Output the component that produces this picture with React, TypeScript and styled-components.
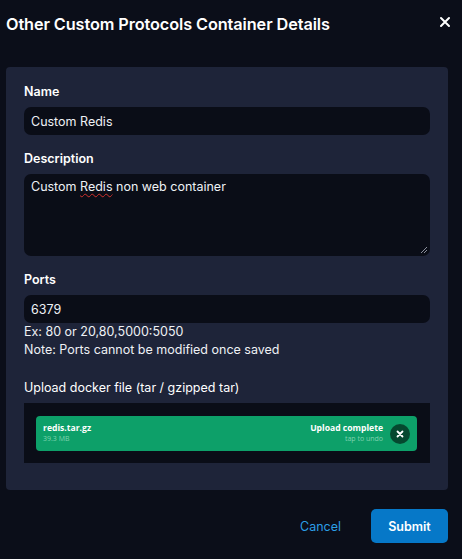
import { createGlobalStyle } from "styled-components";
import styled from "styled-components";

const GlobalStyle = createGlobalStyle`
  html, body {
    margin: 0;
    padding: 0;
    background: #0b0e19;
    font-family: Inter, "Noto Sans", sans-serif;
    color: #f5f7fa;
  }
  * { box-sizing: border-box; }
`;

const Modal = styled.div`
  width: 462px;
  height: 559px;
  background: #0b0e19;
  padding: 0 14px 0 6px;
  display: flex;
  flex-direction: column;
`;

const Header = styled.div`
  display: flex;
  justify-content: space-between;
  align-items: center;
  height: 46px;
  padding-top: 2px;
  margin-bottom: 21px;
`;

const Title = styled.h2`
  margin: 0;
  font-size: 16.3px;
  font-weight: 600;
  color: #ffffff;
  letter-spacing: -0.1px;
`;

const CloseButton = styled.button`
  background: none;
  border: none;
  color: #ffffff;
  padding: 0;
  margin-right: -4px;
  margin-top: -4px;
  display: flex;
  cursor: pointer;
`;

const Panel = styled.div`
  background: #1e2439;
  border-radius: 4px;
  padding: 17px 18px 27px 18px;
  display: flex;
  flex-direction: column;
`;

const Field = styled.div<{ $last?: boolean }>`
  display: flex;
  flex-direction: column;
  margin-bottom: ${({ $last }) => ($last ? "0" : "16px")};
`;

const Label = styled.label<{ $plain?: boolean }>`
  font-size: 12.5px;
  font-weight: ${({ $plain }) => ($plain ? 400 : 600)};
  color: #ffffff;
  margin-bottom: 7px;
  line-height: 16px;
`;

const Input = styled.div`
  height: 28px;
  background: #0a0d17;
  border-radius: 7px;
  padding: 0 7px;
  display: flex;
  align-items: center;
  font-size: 12.5px;
  color: #eef1f5;
`;

const TextArea = styled.div`
  position: relative;
  height: 82px;
  background: #0a0d17;
  border-radius: 7px;
  padding: 5px 7px;
  font-size: 12.5px;
  color: #eef1f5;
`;

const Misspelled = styled.span`
  text-decoration: underline wavy #d0312d;
  text-decoration-thickness: 1px;
  text-underline-offset: 2px;
`;

const Grip = styled.svg`
  position: absolute;
  right: 2px;
  bottom: 2px;
`;

const Hint = styled.div`
  font-size: 12.5px;
  color: #eef1f5;
  line-height: 18px;
`;

const Hints = styled.div`
  margin-top: 0;
  margin-bottom: 21px;
`;

const DropArea = styled.div`
  background: #0a0d17;
  padding: 13px 13px 12px 12px;
`;

const FileItem = styled.div`
  background: #0da069;
  border-radius: 4px;
  height: 35px;
  display: flex;
  align-items: center;
  padding: 0 7px;
  font-family: "Open Sans", sans-serif;
`;

const FileInfo = styled.div<{ $right?: boolean }>`
  display: flex;
  flex-direction: column;
  align-items: ${({ $right }) => ($right ? "flex-end" : "flex-start")};
  flex: ${({ $right }) => ($right ? "0 0 auto" : "1")};
`;

const FileMain = styled.span`
  font-size: 8.6px;
  font-weight: 700;
  color: #ffffff;
  line-height: 11px;
`;

const FileSub = styled.span`
  font-size: 7px;
  color: #7fd3b0;
  line-height: 10px;
`;

const UndoButton = styled.button`
  width: 20px;
  height: 20px;
  border-radius: 50%;
  border: none;
  background: rgba(0, 0, 0, 0.55);
  display: flex;
  align-items: center;
  justify-content: center;
  margin-left: 7px;
  padding: 0;
`;

const Footer = styled.div`
  display: flex;
  justify-content: flex-end;
  align-items: center;
  margin-top: 19px;
  gap: 30px;
`;

const CancelButton = styled.button`
  background: none;
  border: none;
  color: #2c9ee6;
  font-family: inherit;
  font-size: 12.5px;
  padding: 0;
`;

const SubmitButton = styled.button`
  background: #0678c8;
  border: none;
  border-radius: 5px;
  color: #ffffff;
  font-family: inherit;
  font-weight: 600;
  font-size: 12.5px;
  width: 77px;
  height: 34px;
`;

export default function App() {
  return (
    <>
      <GlobalStyle />
      <Modal>
        <Header>
          <Title>Other Custom Protocols Container Details</Title>
          <CloseButton aria-label="Close">
            <svg width="14" height="14" viewBox="0 0 14 14">
              <path d="M3 3L11 11M11 3L3 11" stroke="#fff" strokeWidth="2" strokeLinecap="round" />
            </svg>
          </CloseButton>
        </Header>
        <Panel>
          <Field>
            <Label>Name</Label>
            <Input>Custom Redis</Input>
          </Field>
          <Field>
            <Label>Description</Label>
            <TextArea>
              Custom <Misspelled>Redis</Misspelled> non web container
              <Grip width="8" height="8" viewBox="0 0 8 8">
                <path d="M7 1L1 7M7 4L4 7" stroke="#8a8f9c" strokeWidth="1" />
              </Grip>
            </TextArea>
          </Field>
          <Field $last>
            <Label>Ports</Label>
            <Input>6379</Input>
          </Field>
          <Hints>
            <Hint>Ex: 80 or 20,80,5000:5050</Hint>
            <Hint>Note: Ports cannot be modified once saved</Hint>
          </Hints>
          <Field $last>
            <Label $plain>Upload docker file (tar / gzipped tar)</Label>
            <DropArea>
              <FileItem>
                <FileInfo>
                  <FileMain>redis.tar.gz</FileMain>
                  <FileSub>39.3 MB</FileSub>
                </FileInfo>
                <FileInfo $right>
                  <FileMain>Upload complete</FileMain>
                  <FileSub>tap to undo</FileSub>
                </FileInfo>
                <UndoButton aria-label="Undo">
                  <svg width="8" height="8" viewBox="0 0 8 8">
                    <path d="M1.5 1.5L6.5 6.5M6.5 1.5L1.5 6.5" stroke="#fff" strokeWidth="1.8" strokeLinecap="round" />
                  </svg>
                </UndoButton>
              </FileItem>
            </DropArea>
          </Field>
        </Panel>
        <Footer>
          <CancelButton>Cancel</CancelButton>
          <SubmitButton>Submit</SubmitButton>
        </Footer>
      </Modal>
    </>
  );
}
